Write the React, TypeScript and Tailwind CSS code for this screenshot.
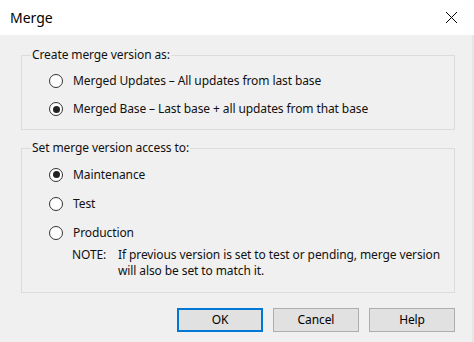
import React from "react";

function Radio({ checked, label }: { checked?: boolean; label: string }) {
  return (
    <div className="flex items-center h-full">
      <span className="ml-[27px] mr-[10px] flex h-[14px] w-[14px] items-center justify-center rounded-full border border-[#333333] bg-white">
        {checked && <span className="h-[7px] w-[7px] rounded-full bg-[#222222]" />}
      </span>
      <span>{label}</span>
    </div>
  );
}

function Btn({ label, primary }: { label: string; primary?: boolean }) {
  return (
    <button
      className={
        "h-[24px] w-[86px] bg-[#e1e1e1] text-[12px] text-black " +
        (primary ? "border-2 border-[#0078d7]" : "border border-[#adadad]")
      }
    >
      {label}
    </button>
  );
}

export default function App() {
  return (
    <div
      className="flex h-[342px] w-[474px] flex-col bg-white text-[12px] tracking-[-0.1px] text-[#111111]"
      style={{ fontFamily: '"Noto Sans", "Open Sans", sans-serif' }}
    >
      <div className="flex h-[35px] items-center justify-between pl-[10px] pr-[16px]">
        <span className="text-[14px] tracking-normal text-black">Merge</span>
        <svg width="13" height="13" viewBox="0 0 13 13" className="text-black">
          <path d="M1 1L12 12M12 1L1 12" stroke="currentColor" strokeWidth="1" />
        </svg>
      </div>
      <div className="flex flex-1 flex-col border-r-2 border-[#e6e6e6] bg-[#f0f0f0] pl-[21px] pr-[17px] pt-[12px]">
        <fieldset className="border border-[#dcdcdc] px-[9px] pb-[6px] pt-[4px]">
          <legend className="h-[16px] px-[1px] leading-[16px]">Create merge version as:</legend>
          <div className="-mx-[9px]">
            <div className="h-[28px]">
              <Radio label="Merged Updates – All updates from last base" />
            </div>
            <div className="h-[28px]">
              <Radio checked label="Merged Base – Last base + all updates from that base" />
            </div>
          </div>
        </fieldset>
        <fieldset className="mt-[10px] border border-[#dcdcdc] px-[9px] pb-[13px] pt-[4px]">
          <legend className="h-[16px] px-[1px] leading-[16px]">Set merge version access to:</legend>
          <div className="-mx-[9px]">
            <div className="h-[29px]">
              <Radio checked label="Maintenance" />
            </div>
            <div className="h-[29px]">
              <Radio label="Test" />
            </div>
            <div className="h-[29px]">
              <Radio label="Production" />
            </div>
            <div className="ml-[50px] flex leading-[16px]">
              <span className="w-[46px] shrink-0">NOTE:</span>
              <span>
                If previous version is set to test or pending, merge version
                <br />
                will also be set to match it.
              </span>
            </div>
          </div>
        </fieldset>
        <div className="mt-[15px] flex justify-end gap-[10px]">
          <Btn primary label="OK" />
          <Btn label="Cancel" />
          <Btn label="Help" />
        </div>
      </div>
    </div>
  );
}
